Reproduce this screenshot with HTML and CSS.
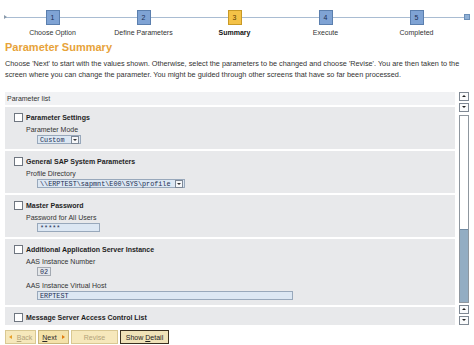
FILE: index.html
```html
<!DOCTYPE html>
<html>
<head>
<meta charset="UTF-8">
<link rel="stylesheet" href="styles.css">
<title>Parameter Summary</title>
</head>
<body>
  <div class="roadmap">
    <span class="road-start"></span>
    <span class="road-end"></span>
    <div class="steps">
      <div class="step"><span class="step-box">1</span><span class="step-label">Choose Option</span></div>
      <div class="step"><span class="step-box">2</span><span class="step-label">Define Parameters</span></div>
      <div class="step current"><span class="step-box">3</span><span class="step-label">Summary</span></div>
      <div class="step"><span class="step-box">4</span><span class="step-label">Execute</span></div>
      <div class="step"><span class="step-box">5</span><span class="step-label">Completed</span></div>
    </div>
  </div>

  <h1 class="page-title">Parameter Summary</h1>
  <p class="intro">Choose 'Next' to start with the values shown. Otherwise, select the parameters to be changed and choose 'Revise'. You are then taken to the<br>screen where you can change the parameter. You might be guided through other screens that have so far been processed.</p>

  <div class="list">
    <div class="list-main">
      <div class="list-head">Parameter list</div>

      <div class="section">
        <div class="sec-head"><span class="check"></span>Parameter Settings</div>
        <div class="label">Parameter Mode</div>
        <div class="field select w-custom">Custom<span class="drop"></span></div>
      </div>

      <div class="section">
        <div class="sec-head"><span class="check"></span>General SAP System Parameters</div>
        <div class="label">Profile Directory</div>
        <div class="field select w-profile">\\ERPTEST\sapmnt\E00\SYS\profile<span class="drop"></span></div>
      </div>

      <div class="section">
        <div class="sec-head"><span class="check"></span>Master Password</div>
        <div class="label">Password for All Users</div>
        <div class="field w-pass">*****</div>
      </div>

      <div class="section">
        <div class="sec-head"><span class="check"></span>Additional Application Server Instance</div>
        <div class="label">AAS Instance Number</div>
        <div class="field plain w-num">02</div>
        <div class="label spaced">AAS Instance Virtual Host</div>
        <div class="field w-host">ERPTEST</div>
      </div>

      <div class="section last">
        <div class="sec-head"><span class="check"></span>Message Server Access Control List</div>
      </div>
    </div>

    <div class="vscroll">
      <span class="sbtn up"></span>
      <span class="sbtn down"></span>
      <div class="track"><div class="thumb"></div></div>
      <span class="sbtn up"></span>
      <span class="sbtn down"></span>
    </div>
  </div>

  <div class="buttons">
    <span class="btn disabled w-back"><span class="arr-left"></span><span><u>B</u>ack</span></span>
    <span class="btn w-next"><span><u>N</u>ext</span><span class="arr-right"></span></span>
    <span class="btn disabled w-revise"><span>Revise</span></span>
    <span class="btn focus w-detail"><span>Show <u>D</u>etail</span></span>
  </div>
</body>
</html>
```

FILE: styles.css
```css
body {
  margin: 0;
  background-color: #ffffff;
  font-family: "Liberation Sans", Arial, sans-serif;
  color: #2b2b2b;
}

/* roadmap */
.roadmap {
  position: relative;
  height: 36px;
  padding-top: 10px;
  box-sizing: border-box;
}
.roadmap::before {
  content: "";
  position: absolute;
  top: 17px;
  left: 5px;
  right: 8px;
  height: 1px;
  background-color: #a9bcd2;
}
.road-start {
  position: absolute;
  left: 4px;
  top: 15px;
  width: 0;
  height: 0;
  border-top: 2px solid transparent;
  border-bottom: 2px solid transparent;
  border-left: 3px solid #8a9aab;
}
.road-end {
  position: absolute;
  left: 464px;
  top: 14px;
  width: 4px;
  height: 4px;
  background-color: #8fb0d6;
  border: 1px solid #6c8fb8;
}
.steps {
  position: relative;
  display: grid;
  grid-template-columns: repeat(5, 91px);
  margin-left: 7px;
}
.step {
  display: flex;
  flex-direction: column;
  align-items: center;
}
.step-box {
  width: 12px;
  height: 13px;
  background-color: #7fa3d4;
  border: 1px solid #5b7fae;
  font-size: 7px;
  line-height: 13px;
  text-align: center;
  color: #1c2f55;
}
.step-label {
  margin-top: 3px;
  font-size: 7px;
  line-height: 9px;
  color: #333;
  white-space: nowrap;
}
.step.current .step-box {
  background-color: #f4c247;
  border-color: #c99a26;
  color: #5a3a00;
}
.step.current .step-label {
  font-weight: bold;
  color: #111;
}

/* heading + intro */
.page-title {
  margin: 4px 0 0 5px;
  font-size: 11px;
  line-height: 14px;
  font-weight: bold;
  color: #e7a33a;
}
.intro {
  margin: 4px 0 0 5px;
  font-size: 7.3px;
  line-height: 11px;
  color: #333;
  white-space: nowrap;
}

/* parameter list */
.list {
  display: flex;
  margin: 12px 0 0 5px;
}
.list-main {
  width: 450px;
}
.list-head {
  height: 13px;
  padding-left: 2px;
  font-size: 7px;
  line-height: 14px;
  background-color: #f1f2f4;
  color: #333;
  margin-bottom: 2px;
}
.section {
  background-color: #e8e9eb;
  padding: 6px 0 5px 9px;
  margin-bottom: 2px;
}
.section.last {
  padding-bottom: 3px;
}
.sec-head {
  display: flex;
  align-items: center;
  font-size: 7px;
  line-height: 9px;
  font-weight: bold;
  color: #1e1e1e;
}
.check {
  width: 7px;
  height: 7px;
  background-color: #ffffff;
  border: 1px solid #6f7680;
  margin-right: 3px;
}
.label {
  margin: 3px 0 0 12px;
  font-size: 7px;
  line-height: 10px;
  color: #333;
}
.label.spaced {
  margin-top: 5px;
}
.field {
  position: relative;
  margin-left: 23px;
  height: 7px;
  padding: 0 2px;
  font-family: "Liberation Mono", "Courier New", monospace;
  font-size: 6.8px;
  line-height: 8px;
  color: #1f2f52;
  background-color: #dce7f3;
  border: 1px solid #98a8bb;
}
.field.plain {
  background-color: #e4e7eb;
  border-color: #a3a9b1;
}
.select .drop {
  position: absolute;
  right: 1px;
  top: 0;
  width: 6px;
  height: 6px;
  background-color: #f6f7f9;
  border: 1px solid #7d8896;
}
.select .drop::after {
  content: "";
  position: absolute;
  left: 1px;
  top: 2px;
  border-left: 2px solid transparent;
  border-right: 2px solid transparent;
  border-top: 2px solid #333;
}
.w-custom { width: 38px; }
.w-profile { width: 142px; }
.w-pass { width: 57px; }
.w-num { width: 8px; }
.w-host { width: 250px; }

/* scrollbar */
.vscroll {
  display: flex;
  flex-direction: column;
  margin-left: 4px;
  width: 10px;
}
.sbtn {
  position: relative;
  width: 8px;
  height: 7px;
  background-color: #fafbfc;
  border: 1px solid #7f8893;
  margin-bottom: 2px;
}
.sbtn::after {
  content: "";
  position: absolute;
  left: 2px;
  top: 2px;
  border-left: 2px solid transparent;
  border-right: 2px solid transparent;
}
.sbtn.up::after {
  border-bottom: 2px solid #222;
}
.sbtn.down::after {
  border-top: 2px solid #222;
}
.track {
  display: flex;
  flex-direction: column;
  justify-content: flex-end;
  width: 8px;
  height: 186px;
  margin: 1px 0 2px;
  background-color: #ffffff;
  border: 1px solid #8f979f;
}
.thumb {
  height: 72px;
  background-color: #93adc3;
  border-top: 1px solid #6f8aa3;
}

/* buttons */
.buttons {
  display: flex;
  gap: 2px;
  margin: 3px 0 0 5px;
}
.btn {
  display: flex;
  align-items: center;
  justify-content: center;
  height: 12px;
  font-size: 7px;
  color: #2a2a2a;
  background-color: #f4e2a9;
  border: 1px solid #c9b57a;
}
.btn.disabled {
  color: #b3a37a;
  background-color: #f6e8bb;
  border-color: #d9c892;
}
.btn.focus {
  background-color: #efe2b8;
  border-color: #3a3020;
  color: #1c1c1c;
}
.arr-left,
.arr-right {
  width: 0;
  height: 0;
  border-top: 2px solid transparent;
  border-bottom: 2px solid transparent;
}
.arr-left {
  border-right: 3px solid #e6a02a;
  margin-right: 5px;
}
.arr-right {
  border-left: 3px solid #e07c10;
  margin-left: 5px;
}
.w-back { width: 29px; }
.w-next { width: 29px; }
.w-revise { width: 45px; }
.w-detail { width: 47px; }
```
